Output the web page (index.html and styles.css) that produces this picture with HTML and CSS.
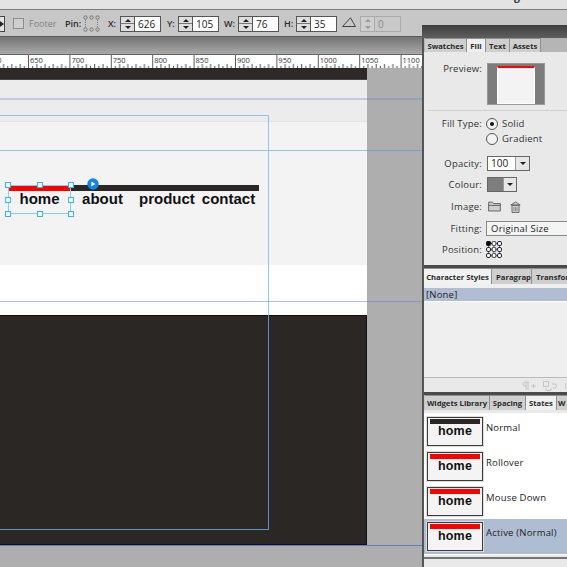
FILE: index.html
```html
<!DOCTYPE html>
<html lang="en">
<head>
<meta charset="utf-8">
<title>Muse</title>
<link rel="stylesheet" href="styles.css">
</head>
<body>
<div class="app">
  <header class="menubar"><span class="signin">Sign In</span></header>
  <div class="toolbar">
    <span class="dropstub"><svg width="4" height="6" viewBox="0 0 4 6"><path d="M0 0l4 3-4 3z" fill="#222"/></svg></span>
    <span class="check"></span>
    <span class="tlabel muted footer-label">Footer</span>
    <span class="tlabel pin-label">Pin:</span>
    <svg class="pin" width="17" height="17" viewBox="0 0 17 17" fill="none" stroke="#666" stroke-width=".8">
      <circle cx="2.5" cy="2.5" r="1.7"/><circle cx="8.5" cy="2.5" r="1.7"/><circle cx="14.5" cy="2.5" r="1.7"/>
      <circle cx="2.5" cy="14.5" r="1.7"/><circle cx="8.5" cy="14.5" r="1.7"/><circle cx="14.5" cy="14.5" r="1.7"/>
      <path d="M2.5 5v7M14.5 5v7" stroke-dasharray="1 1"/>
    </svg>
    <span class="tlabel f-x">X:</span>
    <span class="field"><span class="step"><i class="up"></i><i class="down"></i></span><span class="val">626</span></span>
    <span class="tlabel f-y">Y:</span>
    <span class="field"><span class="step"><i class="up"></i><i class="down"></i></span><span class="val">105</span></span>
    <span class="tlabel f-w">W:</span>
    <span class="field"><span class="step"><i class="up"></i><i class="down"></i></span><span class="val">76</span></span>
    <span class="tlabel f-h">H:</span>
    <span class="field"><span class="step"><i class="up"></i><i class="down"></i></span><span class="val">35</span></span>
    <svg class="angle" width="14" height="10" viewBox="0 0 14 10" fill="none" stroke="#444"><path d="M.5 9.5h13L8.5.8z"/></svg>
    <span class="field off"><span class="step"><i class="up"></i><i class="down"></i></span><span class="val">0</span></span>
  </div>
  <div class="tabstrip"></div>
  <div class="ruler">
    <svg class="ticks" width="430" height="13" aria-hidden="true">
      <defs>
        <pattern id="rt" width="41.4" height="13" patternUnits="userSpaceOnUse" patternTransform="translate(28 0)">
          <path d="M.5 0v13" stroke="#333" stroke-width=".8"/>
          <path d="M4.6 11v2M8.8 9v4M12.9 11v2M17 9v4M21.2 11v2M25.3 9v4M29.5 11v2M33.6 9v4M37.7 11v2" stroke="#222" stroke-width=".8"/>
        </pattern>
      </defs>
      <rect width="430" height="13" fill="url(#rt)"/>
    </svg>
    <span class="rl first">600</span><span class="rl">650</span><span class="rl">700</span><span class="rl">750</span><span class="rl">800</span><span class="rl">850</span><span class="rl">900</span><span class="rl">950</span><span class="rl">1000</span><span class="rl">1050</span><span class="rl">1100</span>
  </div>

  <main class="stage">
    <div class="page">
      <div class="band-top"></div>
      <div class="band-head"></div>
      <div class="band-menu">
        <nav class="site-nav">
          <a class="on">home</a><a>about</a><a class="product">product</a><a>contact</a>
        </nav>
      </div>
      <div class="band-white"></div>
      <div class="band-dark"></div>
    </div>
    <div class="guide g1"></div>
    <div class="guide g2"></div>
    <div class="guide g3"></div>
    <div class="guide g4"></div>
    <div class="frame"></div>
    <div class="selection">
      <b class="h tl"></b><b class="h tc"></b><b class="h tr"></b>
      <b class="h ml"></b><b class="h mr"></b>
      <b class="h bl"></b><b class="h bc"></b><b class="h br"></b>
    </div>
    <svg class="arrowdot" width="12" height="12" viewBox="0 0 12 12"><circle cx="6" cy="6" r="5.7" fill="#1284e6"/><path d="M4.4 3.4l4 2.6-4 2.6z" fill="#fff"/></svg>
  </main>

  <aside class="panel">
    <div class="ptitle"></div>
    <div class="tabs t1">
      <span class="tab">Swatches</span><span class="tab on">Fill</span><span class="tab">Text</span><span class="tab">Assets</span>
    </div>
    <section class="fill">
      <div class="preview-row">
        <span class="lab">Preview:</span>
        <div class="preview"><div class="preview-in"></div></div>
      </div>
      <div class="rule"></div>
      <div class="frow fr-type"><span class="lab">Fill Type:</span><span class="radio sel"></span><span class="opt">Solid</span></div>
      <div class="frow fr-grad"><span class="lab"></span><span class="radio"></span><span class="opt">Gradient</span></div>
      <div class="frow fr-op"><span class="lab">Opacity:</span><span class="sel-box"><span class="num">100</span><span class="dd"><i></i></span></span></div>
      <div class="frow fr-col"><span class="lab">Colour:</span><span class="sel-box colour"><span class="chip"></span><span class="dd"><i></i></span></span></div>
      <div class="frow fr-img"><span class="lab">Image:</span>
        <svg class="folder" width="13" height="11" viewBox="0 0 13 11" fill="#cfcfcf" stroke="#5a5a5a" stroke-width=".9"><path d="M.6 10V1.2h4l1 1.4h6.8V10z"/><path d="M.6 4.4h11.8" fill="none"/></svg>
        <svg class="trash" width="11" height="12" viewBox="0 0 11 12" fill="#d8d8d8" stroke="#5a5a5a" stroke-width=".9"><path d="M.8 4L5.5 1l4.7 3zM2 4.4h7v7H2z"/><path d="M4 6v4M5.5 6v4M7 6v4" fill="none" stroke-width=".6"/></svg>
      </div>
      <div class="frow fr-fit"><span class="lab">Fitting:</span><span class="fitbox">Original Size</span></div>
      <div class="frow fr-pos"><span class="lab">Position:</span>
        <svg width="16" height="17" viewBox="0 0 16 17" fill="#fff" stroke="#111" stroke-width=".9">
          <path d="M5 2.500h1M10.500 2.500h1M5 8.500h1M10.500 8.500h1M5 14.500h1M10.500 14.500h1M2.500 5v1M2.500 11v1M8 5v1M8 11v1M13.500 5v1M13.500 11v1" stroke="#7a2fd0"/>
          <rect x=".5" y=".5" width="4" height="4" rx=".8" fill="#000"/><rect x="6" y=".5" width="4" height="4" rx="1.500"/><rect x="11.500" y=".5" width="4" height="4" rx="1.500"/>
          <rect x=".5" y="6.500" width="4" height="4" rx="1.500"/><rect x="6" y="6.500" width="4" height="4" rx="1.500"/><rect x="11.500" y="6.500" width="4" height="4" rx="1.500"/>
          <rect x=".5" y="12.500" width="4" height="4" rx="1.500"/><rect x="6" y="12.500" width="4" height="4" rx="1.500"/><rect x="11.500" y="12.500" width="4" height="4" rx="1.500"/>
        </svg>
      </div>
    </section>
    <div class="divider"></div>
    <div class="tabs t2">
      <span class="tab on">Character Styles</span><span class="tab para">Paragraph</span><span class="tab">Transform</span>
    </div>
    <section class="styles">
      <div class="none">[None]</div>
    </section>
    <div class="pfoot">
      <svg width="15" height="10" viewBox="0 0 15 10" fill="none" stroke="#c4c4c4"><path d="M4 1v8M6 1v8M7 1H3a2 2 0 000 4h1M9 5h5M11.500 3v4"/></svg>
      <svg width="15" height="10" viewBox="0 0 15 10" fill="none" stroke="#c4c4c4"><path d="M.5.5h5v5h-5zM3 7v2.500h5V7"/><path d="M9 3h2.500a2 2 0 010 4H10"/></svg>
      <svg width="10" height="10" viewBox="0 0 10 10" fill="none" stroke="#c4c4c4"><circle cx="5" cy="5" r="3.500"/></svg>
    </div>
    <div class="divider"></div>
    <div class="tabs t3">
      <span class="tab">Widgets Library</span><span class="tab">Spacing</span><span class="tab on">States</span><span class="tab">W</span>
    </div>
    <section class="states">
      <div class="state"><div class="thumb"><div class="tbar dark"></div><div class="ttext">home</div></div><span>Normal</span></div>
      <div class="state"><div class="thumb"><div class="tbar"></div><div class="ttext">home</div></div><span>Rollover</span></div>
      <div class="state"><div class="thumb"><div class="tbar"></div><div class="ttext">home</div></div><span>Mouse Down</span></div>
      <div class="state active"><div class="thumb"><div class="tbar"></div><div class="ttext">home</div></div><span>Active (Normal)</span></div>
    </section>
    <div class="pfoot2"></div>
  </aside>
</div>
</body>
</html>
```

FILE: styles.css
```css
* { box-sizing: border-box; }
html, body { margin: 0; padding: 0; }
body { background: #adadad; font-family: "Open Sans", "Noto Sans", sans-serif; color: #222; }
.app { position: relative; width: 567px; height: 567px; overflow: hidden; display: flex; flex-direction: column; }

.menubar { height: 10px; background: #e3e3e3; border-bottom: 1px solid #7b7b7b; flex: none; position: relative; overflow: hidden; }
.signin { position: absolute; left: 505px; top: -11px; font-size: 10.500px; font-weight: 700; color: #333; }

.toolbar { height: 27px; flex: none; background: #c7c7c7; border-bottom: 1px solid #5c5c5c; display: flex; align-items: center; font-size: 9.500px; padding-top: 1px; }
.dropstub { width: 5px; height: 16px; background: #e4e4e4; border: 1px solid #444; border-left: 0; display: flex; align-items: center; margin-right: 8px; }
.check { width: 11px; height: 11px; border: 1px solid #8e8e8e; background: #cfcfcf; margin-right: 5px; flex: none; }
.tlabel { font-weight: 600; color: #2c2c2c; font-size: 9px; flex: none; }
.muted { color: #7f7f7f; font-weight: 400; }
.footer-label { width: 36px; }
.pin-label { width: 18px; }
.pin { margin-right: 8px; flex: none; }
.f-x { width: 12px; }
.f-y { width: 11px; margin-left: 6px; }
.f-w { width: 14px; margin-left: 5px; }
.f-h { width: 12px; margin-left: 5px; }
.field { display: flex; height: 16px; width: 41px; flex: none; border: 1px solid #555; background: #fff; }
.step { width: 14px; flex: none; background: linear-gradient(#dedede 0 45%, #777 45% 52%, #dedede 52%); border-right: 1px solid #555; display: flex; flex-direction: column; align-items: center; justify-content: space-between; padding: 2px 0; }
.step i { width: 0; height: 0; border-left: 3px solid transparent; border-right: 3px solid transparent; }
.step .up { border-bottom: 3px solid #222; }
.step .down { border-top: 3px solid #222; }
.val { font-size: 10px; line-height: 14px; padding-left: 3px; color: #222; }
.angle { margin: 0 4px 3px 5px; flex: none; }
.field.off { border-color: #aaa; background: #c9c9c9; }
.off .step { background: #cfcfcf; border-color: #aaa; }
.off .up { border-bottom-color: #999; }
.off .down { border-top-color: #999; }
.off .val { color: #8a8a8a; }

.tabstrip { height: 18px; flex: none; background: linear-gradient(#747474, #a9a9a9); border-bottom: 1px solid #666; }

.ruler { position: relative; height: 13px; flex: none; background: #fff; display: flex; overflow: hidden; }
.ticks { position: absolute; left: 0; top: 0; }
.rl { position: relative; flex: none; width: 41.400px; padding-left: 2px; font-size: 7.500px; line-height: 10px; color: #333; }
.rl.first { margin-left: -13.400px; }

.stage { position: relative; flex: 1; background: repeating-conic-gradient(#acacac 0 25%, #afafaf 0 50%) 0 0 / 2px 2px; }
.page { width: 367px; display: flex; flex-direction: column; height: 477px; }
.band-top { height: 12px; flex: none; background: #2d2926; border-bottom: 1px solid #444; }
.band-head { height: 42px; flex: none; background: #ececec; border-bottom: 1px solid #e2e2e2; }
.band-menu { height: 143px; flex: none; background: #f3f3f3; padding: 63px 0 0 8px; }
.band-white { height: 50px; flex: none; background: #fff; }
.band-dark { flex: 1; background: #2b2724; border-top: 1px solid #111; border-right: 1px solid #111; border-bottom: 1px solid #111; }

.site-nav { display: flex; width: 251px; border-top: 6px solid #2b2724; }
.site-nav a { flex: none; width: 63px; text-align: center; font: 700 15px/16px "Liberation Sans", Arial, sans-serif; color: #111; overflow: hidden; position: relative; }
.site-nav a.on { box-shadow: 0 -6px 0 #ff0000; }
.site-nav .product { width: 62px; padding-left: 5px; white-space: nowrap; text-align: left; }
.site-nav a:last-child { margin-left: 1px; }

.guide { position: absolute; left: 0; width: 422px; }
.g1 { top: 30px; height: 2px; background: rgba(90, 120, 215, .3); }
.g2 { top: 82px; height: 1px; background: rgba(90, 140, 240, .55); }
.g3 { top: 233px; height: 1px; background: rgba(90, 130, 225, .5); }
.g4 { top: 477px; height: 1px; background: #5a7fc8; }
.frame { position: absolute; left: -3px; top: 47px; width: 272px; height: 415px; border: 1px solid rgba(110, 180, 255, .75); }

.selection { position: absolute; left: 8px; top: 117px; width: 63px; height: 29px; border: 1px solid #7fd0f5; }
.h { position: absolute; width: 6px; height: 6px; background: #f4fbff; border: 1px solid #39b5f0; }
.tl { left: -4px; top: -4px; } .tc { left: 28px; top: -4px; } .tr { right: -4px; top: -4px; }
.ml { left: -4px; top: 11px; } .mr { right: -4px; top: 11px; }
.bl { left: -4px; bottom: -4px; } .bc { left: 28px; bottom: -4px; } .br { right: -4px; bottom: -4px; }
.arrowdot { position: absolute; left: 87px; top: 110px; }

.panel { position: absolute; left: 422px; top: 25px; width: 165px; height: 542px; background: #e9e9e9; border-left: 2px solid #555; font-size: 9.500px; display: flex; flex-direction: column; }
.ptitle { height: 13px; flex: none; background: linear-gradient(#3f3f3f, #5e5e5e); margin-left: -2px; }
.tabs { display: flex; align-items: flex-end; background: #b5b5b5; flex: none; overflow: hidden; white-space: nowrap; }
.tab { flex: none; font-size: 7.700px; font-weight: 700; color: #2a2a2a; text-align: center; background: #cfcfcf; border: 1px solid #8f8f8f; border-bottom: 0; border-left: 0; height: 100%; display: flex; align-items: center; justify-content: center; overflow: hidden; }
.tab.on { background: #efefef; }
.t1 { height: 14px; padding-left: 1px; }
.t1 .tab:nth-child(1) { width: 42px; }
.t1 .tab:nth-child(2) { width: 19px; }
.t1 .tab:nth-child(3) { width: 24px; }
.t1 .tab:nth-child(4) { width: 31px; }
.t2 { height: 16px; background: #c6c6c6; }
.t2 .tab:nth-child(1) { width: 68px; background: #f2f2f2; }
.t2 .tab.para { width: 40px; justify-content: flex-start; padding-left: 4px; }
.t2 .tab:nth-child(3) { width: 50px; justify-content: flex-start; padding-left: 4px; }
.t3 { height: 15px; padding-left: 1px; background: #c6c6c6; }
.t3 .tab:nth-child(1) { width: 65px; }
.t3 .tab:nth-child(2) { width: 36px; }
.t3 .tab:nth-child(3) { width: 31px; }
.t3 .tab:nth-child(4) { width: 20px; justify-content: flex-start; padding-left: 1px; }

.fill { height: 213px; flex: none; display: flex; flex-direction: column; background: #e9e9e9; }
.lab { width: 58px; flex: none; text-align: right; font-size: 9.500px; color: #333; letter-spacing: .2px; }
.preview-row { display: flex; gap: 5px; padding-top: 11px; height: 57px; align-items: flex-start; }
.preview-row .lab { line-height: 12px; }
.preview { width: 58px; height: 42px; background: #7c7c7c; padding: 2px 9px 0; border: 1px solid #999; }
.preview-in { height: 38px; background: #f3f3f3; border: 1px solid #fff; border-top: 2px solid #ff0000; border-bottom: 1px solid #fff; }
.rule { height: 1px; background: #cfcfcf; margin: 1px 0 0 4px; width: 140px; flex: none; }
.frow { display: flex; align-items: center; gap: 4px; flex: none; }
.fr-type { height: 15px; margin-top: 5px; }
.fr-grad { height: 15px; }
.fr-op { height: 17px; margin-top: 9px; }
.fr-col { height: 17px; margin-top: 4px; }
.fr-img { height: 17px; margin-top: 5px; gap: 4px; }
.fr-img .folder { margin-left: 2px; }
.fr-img .trash { margin-left: 5px; }
.fr-fit { height: 17px; margin-top: 5px; }
.fr-pos { height: 17px; margin-top: 4px; }
.radio { width: 12px; height: 12px; border-radius: 50%; border: 1px solid #555; background: #f2f2f2; position: relative; flex: none; }
.radio.sel::after { content: ""; position: absolute; left: 3px; top: 3px; width: 4px; height: 4px; border-radius: 50%; background: #111; }
.opt { font-size: 9.500px; color: #333; letter-spacing: .2px; }
.sel-box { display: flex; height: 15px; border: 1px solid #666; background: #fff; margin-left: 1px; }
.num { width: 27px; font-size: 10px; line-height: 13px; padding-left: 3px; }
.dd { width: 14px; background: #e6e6e6; border-left: 1px solid #999; display: flex; align-items: center; justify-content: center; }
.dd i { width: 0; height: 0; border-left: 3px solid transparent; border-right: 3px solid transparent; border-top: 3px solid #222; }
.chip { width: 15px; background: #7e7e7e; }
.sel-box .chip + .dd { width: 13px; }
.fitbox { width: 90px; height: 15px; border: 1px solid #888; background: #f4f4f4; font-size: 9.500px; line-height: 14px; padding-left: 4px; letter-spacing: .25px; }

.divider { height: 3px; flex: none; background: #4a4a4a; }
.styles { height: 94px; flex: none; background: #efefef; padding-top: 4px; border-bottom: 1px solid #bbb; }
.none { height: 14px; background: #b0bdd2; line-height: 14px; font-size: 9.500px; padding-left: 2px; letter-spacing: .2px; border-bottom: 1px solid #fff; }
.pfoot { height: 14px; flex: none; background: #e9e9e9; display: flex; align-items: center; gap: 6px; padding: 2px 0 0 98px; }
.states { height: 142px; flex: none; background: #fff; padding-top: 1px; display: flex; flex-direction: column; margin-top: 3px; }
.state { height: 35px; flex: none; display: flex; gap: 3px; padding: 3px 0 0 3px; font-size: 9.500px; letter-spacing: .2px; }
.state span { line-height: 22px; color: #222; }
.state.active { background: #afbdd3; }
.thumb { width: 56px; height: 29px; flex: none; border: 1px solid #3a3a3a; background: #f4f4f4; padding: 1px 2px; box-shadow: 0 0 0 1px #ddd; }
.tbar { height: 5px; background: #ff0000; }
.tbar.dark { background: #2b2724; }
.ttext { font: 700 12.500px/15px "Liberation Sans", Arial, sans-serif; text-align: center; color: #111; }
.pfoot2 { flex: 1; background: #e9e9e9; border-top: 2px solid #777; margin-top: 2px; }
```
